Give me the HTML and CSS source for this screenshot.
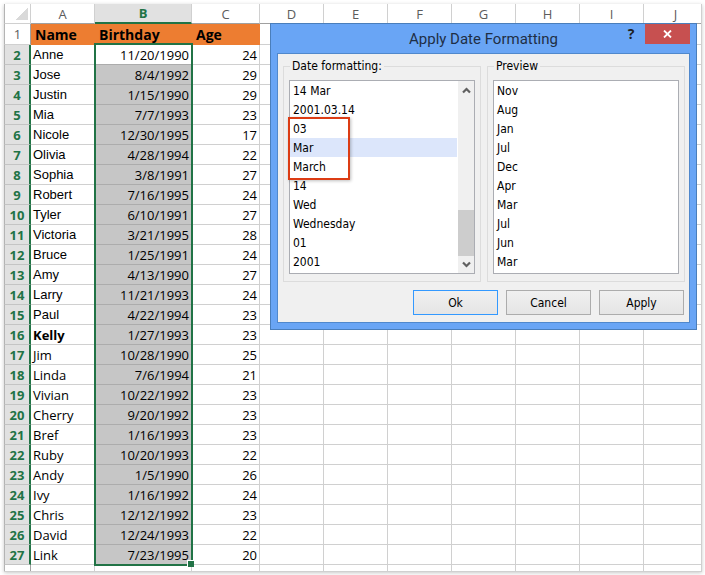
FILE: index.html
```html
<!DOCTYPE html>
<html lang="en">
<head>
<meta charset="utf-8">
<title>Apply Date Formatting</title>
<link rel="stylesheet" href="styles.css">
</head>
<body>
<main class="sheet">
  <table class="grid">
    <colgroup>
      <col class="col-index"><col class="col-std"><col class="col-date"><col class="col-age">
      <col class="col-std"><col class="col-std"><col class="col-std"><col class="col-std"><col class="col-std"><col class="col-std"><col>
    </colgroup>
    <thead>
      <tr><th class="corner"></th><th>A</th><th class="active">B</th><th>C</th><th>D</th><th>E</th><th>F</th><th>G</th><th>H</th><th>I</th><th class="last">J</th></tr>
    </thead>
    <tbody id="rows">
      <tr class="titles"><th>1</th><td>Name</td><td>Birthday</td><td>Age</td><td></td><td></td><td></td><td></td><td></td><td></td><td></td></tr>
    </tbody>
  </table>

  <section class="dialog" role="dialog" aria-labelledby="dialog-title">
    <header class="titlebar">
      <h1 id="dialog-title">Apply Date Formatting</h1>
      <button class="help" type="button" aria-label="Help">?</button>
      <button class="close" type="button" aria-label="Close">
        <svg width="9" height="8" viewBox="0 0 9 8"><path d="M1 .5 8 7.5M8 .5 1 7.5" stroke="#fff" stroke-width="1.8"/></svg>
      </button>
    </header>
    <form class="body">
      <div class="groups">
        <fieldset>
          <legend><label for="formats">Date formatting:</label></legend>
          <div class="listbox">
            <select id="formats" size="10">
              <option>14 Mar</option><option>2001.03.14</option><option>03</option><option selected>Mar</option><option>March</option>
              <option>14</option><option>Wed</option><option>Wednesday</option><option>01</option><option>2001</option>
            </select>
            <div class="scrollbar">
              <svg width="9" height="7" viewBox="0 0 9 7"><path d="M1 5.5 4.5 2 8 5.5" fill="none" stroke="#606060" stroke-width="2.2"/></svg>
              <span class="thumb"></span>
              <svg width="9" height="7" viewBox="0 0 9 7"><path d="M1 1.5 4.5 5 8 1.5" fill="none" stroke="#606060" stroke-width="2.2"/></svg>
            </div>
            <span class="highlight"></span>
          </div>
        </fieldset>
        <fieldset>
          <legend>Preview</legend>
          <ul class="listbox preview">
            <li>Nov</li><li>Aug</li><li>Jan</li><li>Jul</li><li>Dec</li><li>Apr</li><li>Mar</li><li>Jul</li><li>Jun</li><li>Mar</li>
          </ul>
        </fieldset>
      </div>
      <div class="actions">
        <button type="button" class="primary">Ok</button>
        <button type="button">Cancel</button>
        <button type="button">Apply</button>
      </div>
    </form>
  </section>
</main>
<script src="script.js"></script>
</body>
</html>
```
FILE: styles.css
```css
* { box-sizing: border-box; }

body {
  margin: 0;
  padding: 4px 3px 3px 4px;
  background: #fff;
  color: #000;
  font-family: "Open Sans", sans-serif;
  font-size: 13px;
}

.sheet {
  position: relative;
  border: solid #d0d0d0;
  border-width: 0 1px 1px 0;
  box-shadow: 0 1px 4px rgba(0, 0, 0, 0.22);
}

.grid {
  width: 100%;
  table-layout: fixed;
  border-collapse: separate;
  border-spacing: 0;
}

.col-index { width: 27px; }
.col-std { width: 64px; }
.col-date { width: 97px; }
.col-age { width: 68px; }

.grid th,
.grid td {
  height: 20px;
  padding: 0 2px;
  border: solid #d0d0d0;
  border-width: 0 1px 1px 0;
  line-height: 18px;
  white-space: nowrap;
}

.grid thead th {
  border-bottom-color: #a0a0a0;
  color: #5c5c5c;
  font-weight: 400;
}

.grid thead .corner {
  border-bottom-color: #d0d0d0;
  background: linear-gradient(135deg, transparent 50%, #d9d9d9 50%) 11px 4px / 12px 12px no-repeat;
}

.grid thead .active {
  border-bottom: 2px solid #217346;
  background: #e1e1e1;
  color: #217346;
  font-weight: 700;
}

.grid thead .last {
  padding-left: 8px;
  border-right: 0;
}

.grid tbody td:last-child { border-right: 0; }

.grid tbody th {
  padding: 0;
  border-right-color: #a0a0a0;
  color: #5c5c5c;
  font-weight: 400;
}

.grid th:first-child { border-left: 1px solid #b4b4b4; }

.grid tbody .selected th {
  border-right: 2px solid #217346;
  border-bottom-color: #c4c4c4;
  background: #e1e1e1;
  color: #217346;
  font-weight: 700;
}

.grid .titles td,
.grid .titles th {
  height: 21px;
  padding-top: 1px;
  line-height: 19px;
}

.titles td {
  font-size: 14px;
  font-weight: 700;
}

.grid .titles td:nth-child(-n+4) {
  padding-left: 4px;
  border-color: #ed7d31;
  background: #ed7d31;
}

.selected .date,
.selected .age { text-align: right; }

.grid .selected .date {
  border-bottom-color: #acacac;
  background: #c6c6c6;
}

.grid .selected:nth-child(2) .date {
  position: relative;
  background: #fff;
}

.arial { font-family: "Liberation Sans", sans-serif; }
.bold { font-weight: 700; }

.selection {
  position: absolute;
  z-index: 1;
  top: -2px;
  left: -1px;
  width: 99px;
  height: 523px;
  border: 2px solid #217346;
}

.selection::after {
  content: "";
  position: absolute;
  right: -3px;
  bottom: -3px;
  width: 6px;
  height: 6px;
  border: solid #fff;
  border-width: 1px 0 0 1px;
  background: #217346;
}

.grid .tail th,
.grid .tail td {
  height: 6px;
  border-bottom: 0;
  line-height: 6px;
}

.dialog {
  position: absolute;
  z-index: 2;
  top: 19px;
  left: 266px;
  width: 427px;
  padding: 0 6px 6px;
  border: 1px solid #4a7ebb;
  background: #69a5f5;
  font-family: "DejaVu Sans Condensed", "DejaVu Sans", sans-serif;
  font-size: 12px;
}

.titlebar {
  position: relative;
  display: flex;
  height: 29px;
  justify-content: center;
}

.titlebar h1 {
  margin: 0;
  color: #1f2f45;
  font: 400 15px/30px Roboto, sans-serif;
}

.titlebar button {
  position: absolute;
  top: 0;
  padding: 0;
  border: 0;
  background: none;
}

.titlebar .help {
  right: 52px;
  width: 14px;
  height: 20px;
  color: #1e1e1e;
  font: 700 14px/20px "Open Sans", sans-serif;
}

.titlebar .close {
  display: grid;
  right: 0;
  width: 45px;
  height: 20px;
  place-items: center;
  background: #c75050;
}

.body {
  padding: 4px 4px 7px 5px;
  border: 1px solid #5088cc;
  background: #f0f0f0;
}

.groups {
  display: grid;
  grid-template-columns: 1fr 1fr;
  gap: 6px;
}

fieldset {
  min-width: 0;
  margin: 0;
  padding: 5px 5px 7px;
  border: 1px solid #dcdcdc;
}

legend {
  margin-left: 1px;
  padding: 0 2px;
  line-height: 17px;
}

.listbox {
  position: relative;
  display: flex;
  height: 194px;
  margin: 0;
  padding: 0;
  border: 1px solid #abadb3;
  background: #fff;
}

.preview {
  display: block;
  padding-top: 1px;
  list-style: none;
}

.preview li {
  padding-left: 3px;
  line-height: 19px;
}

select {
  flex: 1;
  min-width: 0;
  height: 190px;
  padding: 0;
  overflow: hidden;
  border: 0;
  outline: 0;
  background: #fff;
  color: #000;
  font: inherit;
}

option {
  height: 19px;
  min-height: 19px;
  padding: 3px 3px 0;
}

option:checked {
  background: linear-gradient(#dce6fb, #dce6fb);
  color: #000;
}

.scrollbar {
  display: flex;
  width: 16px;
  flex-direction: column;
  align-items: center;
  margin-left: 1px;
  padding: 6px 0 5px;
  background: #f0f0f0;
}

.thumb {
  width: 100%;
  height: 46px;
  margin: auto 0 5px;
  background: #cdcdcd;
}

.highlight {
  position: absolute;
  top: 36px;
  left: -2px;
  width: 62px;
  height: 63px;
  border: 2px solid #dc3c14;
  box-shadow: 1px 1px 3px rgba(0, 0, 0, 0.25);
  pointer-events: none;
}

.actions {
  display: flex;
  justify-content: flex-end;
  gap: 8px;
  margin-top: 8px;
  padding-right: 1px;
}

.actions button {
  width: 85px;
  height: 25px;
  padding: 0;
  border: 1px solid #acacac;
  background: linear-gradient(#f0f0f0, #e5e5e5);
  color: #000;
  font: inherit;
}

.actions .primary { border-color: #3399ff; }
```
FILE: script.js
```js
const people = [
  ["Anne", "11/20/1990", 24], ["Jose", "8/4/1992", 29], ["Justin", "1/15/1990", 29],
  ["Mia", "7/7/1993", 23], ["Nicole", "12/30/1995", 17], ["Olivia", "4/28/1994", 22],
  ["Sophia", "3/8/1991", 27], ["Robert", "7/16/1995", 24], ["Tyler", "6/10/1991", 27],
  ["Victoria", "3/21/1995", 28], ["Bruce", "1/25/1991", 24], ["Amy", "4/13/1990", 27],
  ["Larry", "11/21/1993", 24], ["Paul", "4/22/1994", 23], ["Kelly", "1/27/1993", 23],
  ["Jim", "10/28/1990", 25], ["Linda", "7/6/1994", 21], ["Vivian", "10/22/1992", 23],
  ["Cherry", "9/20/1992", 23], ["Bref", "1/16/1993", 23], ["Ruby", "10/20/1993", 22],
  ["Andy", "1/5/1990", 26], ["Ivy", "1/16/1992", 24], ["Chris", "12/12/1992", 23],
  ["David", "12/24/1993", 22], ["Link", "7/23/1995", 20]
];
const blanks = "<td></td>".repeat(7);
const nameClass = i => i < 14 ? "arial" : i === 14 ? "bold" : "";

document.getElementById("rows").insertAdjacentHTML("beforeend",
  people.map(([name, date, age], i) =>
    `<tr class="selected"><th>${i + 2}</th><td class="${nameClass(i)}">${name}</td>` +
    `<td class="date">${date}${i ? "" : '<span class="selection"></span>'}</td>` +
    `<td class="age">${age}</td>${blanks}</tr>`).join("") +
  `<tr class="tail"><th></th><td></td><td></td><td></td>${blanks}</tr>`);
```
